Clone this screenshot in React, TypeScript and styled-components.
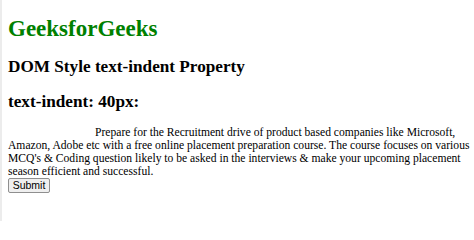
import React from 'react';
import styled, { createGlobalStyle } from 'styled-components';

const GlobalStyle = createGlobalStyle`
  html, body {
    margin: 0;
    padding: 0;
    background: #ffffff;
  }
`;

export default function App() {
  return (
    <>
      <GlobalStyle />
      <Page>
        <Title>GeeksforGeeks</Title>
        <Heading>DOM Style text-indent Property</Heading>
        <Heading>text-indent: 40px:</Heading>
        <Paragraph>
          Prepare for the Recruitment drive of product based companies like
          Microsoft, Amazon, Adobe etc with a free online placement preparation
          course. The course focuses on various MCQ's &amp; Coding question
          likely to be asked in the interviews &amp; make your upcoming
          placement season efficient and successful.
        </Paragraph>
        <Button type='button'>Submit</Button>
      </Page>
    </>
  );
}

const Page = styled.div`
  min-height: 221px;
  box-sizing: border-box;
  border-left: 2px solid #ececec;
  padding: 15px 4px 0 6px;
  font-family: 'Liberation Serif', 'Times New Roman', serif;
  color: #000000;
`;

const Title = styled.h1`
  margin: 0;
  font-size: 23px;
  line-height: 27px;
  font-weight: bold;
  color: #008000;
`;

const Heading = styled.h2`
  margin: 14px 0 0;
  font-size: 17.2px;
  line-height: 21px;
  font-weight: bold;
`;

const Paragraph = styled.p`
  margin: 14px 0 0;
  font-size: 11.6px;
  line-height: 13px;
  text-indent: 87px;
`;

const Button = styled.button`
  display: block;
  margin: 0;
  width: 42px;
  height: 15px;
  padding: 0;
  font-family: 'Liberation Sans', Arial, sans-serif;
  font-size: 10.5px;
  line-height: 13px;
  color: #000000;
  background: #efefef;
  border: 1px solid #8f8f8f;
  border-radius: 2px;
`;
